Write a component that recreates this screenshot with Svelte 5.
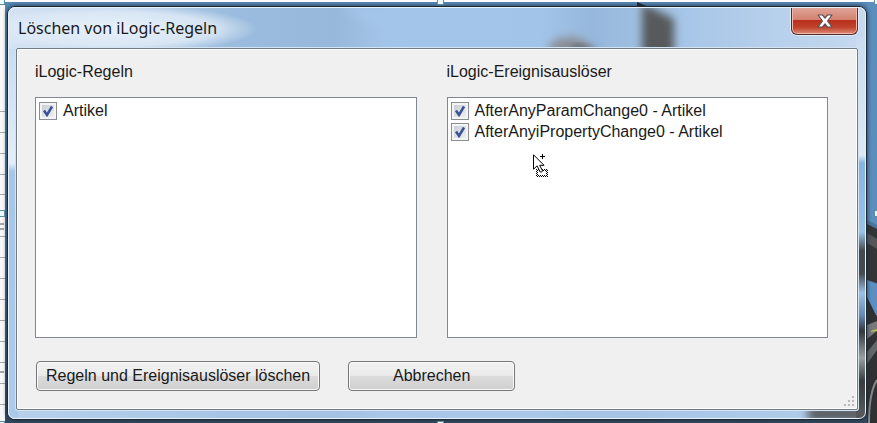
<script lang="ts">
	type Entry = { id: string; text: string; checked: boolean };

	let rules: Entry[] = $state([{ id: 'rule-0', text: 'Artikel', checked: true }]);

	let triggers: Entry[] = $state([
		{ id: 'trigger-0', text: 'AfterAnyParamChange0 - Artikel', checked: true },
		{ id: 'trigger-1', text: 'AfterAnyiPropertyChange0 - Artikel', checked: true }
	]);

	let open = $state(true);

	function close() {
		open = false;
	}

	function deleteChecked() {
		rules = rules.filter((r) => !r.checked);
		triggers = triggers.filter((t) => !t.checked);
	}
</script>

{#snippet entryList(entries: Entry[])}
	{#each entries as entry (entry.id)}
		<label class="entry">
			<input type="checkbox" bind:checked={entry.checked} />
			<span>{entry.text}</span>
		</label>
	{/each}
{/snippet}

<div class="desktop">
	<svg class="scenery" viewBox="0 0 877 423" preserveAspectRatio="none" aria-hidden="true">
		<defs>
			<linearGradient id="sky" x1="0" y1="0" x2="0" y2="1">
				<stop offset="0" stop-color="#5888b5" />
				<stop offset="0.6" stop-color="#4a729b" />
				<stop offset="1" stop-color="#33495c" />
			</linearGradient>
		</defs>
		<rect width="877" height="423" fill="url(#sky)" />
		<path d="M867 0h10v225l-10 -5z" fill="#5b8dbd" />
		<path d="M867 224l10 5v54l-10 -3z" fill="#343536" />
		<path d="M867 233l10 6v10l-10 -6z" fill="#555658" />
		<path d="M867 280l10 4v31h-10z" fill="#5b8fc4" />
		<path d="M867 297l5 10l5 10v106h-10z" fill="#303132" />
		<path d="M867 325l10 -4v10l-10 8z" fill="#77797a" />
		<path d="M871 331l6 -2v2l-6 1z" fill="#b7c83a" />
		<path d="M867 352l10 -12v10l-10 14z" fill="#62676a" />
		<path d="M877 380q-8 12 -8 43" fill="none" stroke="#83898c" stroke-width="2" />
		<path d="M637 2l12 5h-12z" fill="#20262b" />
		<rect width="5" height="423" fill="#f8f8f8" />
		<path
			d="M0 111h5M0 132h5M0 153h5M0 174h5M0 194h5M0 236h5M0 257h5M0 278h5M0 299h5M0 320h5M0 341h5M0 362h5M0 383h5M0 404h5"
			stroke="#a5a9ad"
			shape-rendering="crispEdges"
		/>
		<path d="M0 224h4M0 229h4M0 372h4" stroke="#4b5262" />
		<rect width="877" height="2" fill="#fdfdfd" />
	</svg>

	{#if open}
		<section class="window" aria-labelledby="window-title">
			<svg class="glass" viewBox="0 0 858 412" preserveAspectRatio="none" aria-hidden="true">
				<defs>
					<linearGradient id="frame" x1="0" y1="0" x2="1" y2="0">
						<stop offset="0" stop-color="#d5e3f3" />
						<stop offset="0.12" stop-color="#bfd5ed" />
						<stop offset="0.26" stop-color="#9bbcde" />
						<stop offset="0.38" stop-color="#97b8da" />
						<stop offset="0.44" stop-color="#a3c5e9" />
						<stop offset="0.62" stop-color="#a2c4e8" />
						<stop offset="0.68" stop-color="#96b8dc" />
						<stop offset="0.8" stop-color="#a9c7e8" />
						<stop offset="1" stop-color="#c6d9ef" />
					</linearGradient>
					<linearGradient id="side" x1="0" y1="0" x2="0" y2="1">
						<stop offset="0" stop-color="#c9dcf1" />
						<stop offset="0.31" stop-color="#e3eef8" />
						<stop offset="0.33" stop-color="#a6c6e8" />
						<stop offset="1" stop-color="#adcbeb" />
					</linearGradient>
					<linearGradient id="reflection" x1="0" y1="0" x2="0" y2="1">
						<stop offset="0" stop-color="#c9dcf1" />
						<stop offset="0.31" stop-color="#dce8f5" />
						<stop offset="0.33" stop-color="#86b5e1" />
						<stop offset="0.51" stop-color="#9cc2e8" />
						<stop offset="0.56" stop-color="#434a50" />
						<stop offset="0.62" stop-color="#464b52" />
						<stop offset="0.67" stop-color="#9bc0e6" />
						<stop offset="0.73" stop-color="#6586b1" />
						<stop offset="0.77" stop-color="#33383d" />
						<stop offset="0.84" stop-color="#9b9fa2" />
						<stop offset="0.9" stop-color="#393d40" />
						<stop offset="1" stop-color="#55585b" />
					</linearGradient>
					<radialGradient id="glow">
						<stop offset="0" stop-color="#e8f1fa" />
						<stop offset="0.7" stop-color="#e0ebf7" stop-opacity="0.8" />
						<stop offset="1" stop-color="#e0ebf7" stop-opacity="0" />
					</radialGradient>
					<filter id="soft" x="-50%" y="-50%" width="200%" height="200%">
						<feGaussianBlur stdDeviation="4" />
					</filter>
				</defs>
				<rect width="858" height="412" fill="url(#frame)" />
				<path d="M335 0l65 42h40l-60 -42z" fill="#a3c5e9" filter="url(#soft)" />
				<ellipse cx="110" cy="22" rx="140" ry="24" fill="url(#glow)" />
				<ellipse cx="562" cy="44" rx="22" ry="14" fill="#8b8f96" filter="url(#soft)" />
				<path d="M565 38l30 6h-30z" fill="#474c54" filter="url(#soft)" />
				<path d="M634 -4l32 16v38h-32z" fill="#565a5b" filter="url(#soft)" />
				<rect y="42" width="10" height="370" fill="url(#side)" />
				<rect y="402" width="858" height="10" fill="#a9c7e8" opacity="0.7" />
				<rect x="848" y="30" width="10" height="382" fill="url(#reflection)" />
				<rect x="800" y="400" width="70" height="14" fill="#55585b" filter="url(#soft)" />
			</svg>

			<header class="titlebar">
				<h1 id="window-title">Löschen von iLogic-Regeln</h1>
				<button class="close" type="button" aria-label="Schließen" onclick={close}>
					<svg viewBox="0 0 18 14" width="18" height="14" aria-hidden="true">
						<path
							d="M2 1h4.500l2.500 3l2.500 -3h4.500l-4.500 6l4.500 6h-4.500l-2.500 -3l-2.500 3h-4.500l4.500 -6z"
							fill="#fff"
							stroke="#5b5057"
							stroke-width="1.200"
							stroke-linejoin="round"
						/>
					</svg>
				</button>
			</header>

			<main class="client">
				<div class="columns">
					<fieldset>
						<legend>iLogic-Regeln</legend>
						<div class="list">
							{@render entryList(rules)}
						</div>
					</fieldset>
					<fieldset>
						<legend>iLogic-Ereignisauslöser</legend>
						<div class="list">
							{@render entryList(triggers)}
							<svg class="pointer" viewBox="0 0 18 24" width="18" height="24" aria-hidden="true">
								<defs>
									<pattern id="checker" width="2" height="2" patternUnits="userSpaceOnUse">
										<path d="M0 0h1v1h-1zM1 1h1v1h-1z" />
									</pattern>
								</defs>
								<path
									d="M3 15h12v8h-12zM5 17v4h8v-4z"
									fill="url(#checker)"
									fill-rule="evenodd"
									shape-rendering="crispEdges"
								/>
								<path
									d="M0.500 0.800v14.500l3.500 -3.500l3 6q2 1 2.500 -1l-2.800 -5.500h4.300z"
									fill="#fff"
									stroke="#000"
								/>
								<path d="M7 2.500h5M9.500 0v5" stroke="#000" />
							</svg>
						</div>
					</fieldset>
				</div>
				<div class="buttons">
					<button class="push" type="button" onclick={deleteChecked}>
						Regeln und Ereignisauslöser löschen
					</button>
					<button class="push cancel" type="button" onclick={close}>Abbrechen</button>
				</div>
				<svg class="grip" viewBox="0 0 12 12" width="12" height="12" aria-hidden="true">
					<path d="M9 1h2v2h-2zM5 5h2v2h-2zM9 5h2v2h-2zM1 9h2v2h-2zM5 9h2v2h-2zM9 9h2v2h-2z" fill="#b9b9b9" />
				</svg>
			</main>
		</section>
	{/if}

	<i class="handle top left"></i>
	<i class="handle top center"></i>
	<i class="handle top right"></i>
	<i class="handle middle left"></i>
	<i class="handle middle right"></i>
	<i class="handle bottom left"></i>
	<i class="handle bottom center"></i>
</div>

<style>
	:global(body) {
		margin: 0;
	}

	.desktop {
		position: relative;
		display: flex;
		box-sizing: border-box;
		min-height: 100vh;
		padding: 6px 10px 3px 7px;
		overflow: hidden;
		font-family: 'Liberation Sans', Arial, sans-serif;
		font-size: 16px;
		line-height: 20px;
		color: #1a1a1a;
	}

	.scenery,
	.glass {
		position: absolute;
		inset: 0;
		width: 100%;
		height: 100%;
	}

	.window {
		position: relative;
		display: flex;
		flex: 1;
		flex-direction: column;
		min-width: 0;
		padding: 0 8px 9px;
		border: 1px solid #1c2833;
		border-radius: 8px;
		overflow: hidden;
		box-shadow: 0 0 4px #1c2f42;
	}

	.window::after {
		content: '';
		position: absolute;
		inset: 0;
		border: 1px solid #e9f2fb;
		border-radius: 7px;
		pointer-events: none;
	}

	.titlebar {
		position: relative;
		display: flex;
		justify-content: space-between;
		align-items: flex-start;
		height: 41px;
	}

	h1 {
		margin: 10px 2px;
		font-family: 'Noto Sans', 'Open Sans', sans-serif;
		font-size: 16px;
		font-weight: 400;
		line-height: 22px;
		white-space: nowrap;
	}

	.close {
		display: flex;
		justify-content: center;
		align-items: center;
		width: 67px;
		height: 28px;
		padding: 0;
		border: 1px solid #552d30;
		border-top: 0;
		border-radius: 0 0 6px 6px;
		background: linear-gradient(#dfa79b, #d4816f 48%, #b9301f 50%, #c0422c 75%, #dc8d76);
		box-shadow:
			inset 0 0 0 1px #efb9ad,
			0 0 0 1px #dfeaf5;
	}

	.client {
		position: relative;
		display: flex;
		flex: 1;
		flex-direction: column;
		padding: 13px 29px 18px 18px;
		border: 1px solid #737c85;
		border-radius: 2px;
		background: #f0f0f0;
		box-shadow:
			inset 0 0 0 1px #fff,
			0 0 0 1px #d5e4f3;
	}

	.columns {
		display: flex;
		flex: 1;
		gap: 30px;
	}

	fieldset {
		display: flex;
		flex: 1;
		flex-direction: column;
		min-width: 0;
		margin: 0;
		padding: 0;
		border: 0;
	}

	legend {
		height: 35px;
		padding: 0;
	}

	.list {
		position: relative;
		flex: 1;
		padding: 2px 3px;
		border: 1px solid #828790;
		background: #fff;
	}

	.entry {
		display: flex;
		align-items: center;
		gap: 6px;
		height: 21px;
		white-space: nowrap;
	}

	.entry input {
		appearance: none;
		flex: none;
		width: 18px;
		height: 18px;
		margin: 0;
		border: 1px solid #8b8e93;
		background: linear-gradient(135deg, #c5cad2, #f3f4f6);
		box-shadow: inset 0 0 0 2px #f4f4f4;
	}

	.entry input:checked {
		background:
			url("data:image/svg+xml,%3Csvg xmlns='http://www.w3.org/2000/svg' viewBox='0 0 16 16'%3E%3Cpath d='M4 7.500L7 12L12 3.500' fill='none' stroke='%233c5297' stroke-width='2.500'/%3E%3C/svg%3E"),
			linear-gradient(135deg, #c5cad2, #f3f4f6);
	}

	.pointer {
		position: absolute;
		top: 56px;
		left: 85px;
	}

	.buttons {
		display: flex;
		gap: 28px;
		margin-top: 23px;
		padding-left: 1px;
	}

	.push {
		height: 30px;
		padding: 0 9px;
		border: 1px solid #777;
		border-radius: 4px;
		background: linear-gradient(#f2f2f2, #ebebeb 48%, #dcdcdc 50%, #cfcfcf);
		box-shadow: inset 0 0 0 1px #fafafa;
		font: inherit;
		color: inherit;
		white-space: nowrap;
	}

	.cancel {
		width: 167px;
	}

	.grip {
		position: absolute;
		right: 2px;
		bottom: 2px;
	}

	.handle {
		position: absolute;
		width: 5px;
		height: 5px;
		border: 1px solid #5e8ca2;
		background: #eafaff;
	}

	.top {
		top: -2px;
	}

	.middle {
		top: 50%;
		margin-top: -2px;
	}

	.bottom {
		bottom: -5px;
	}

	.left {
		left: -2px;
	}

	.center {
		left: 50%;
		margin-left: -2px;
	}

	.right {
		right: -4px;
	}
</style>
